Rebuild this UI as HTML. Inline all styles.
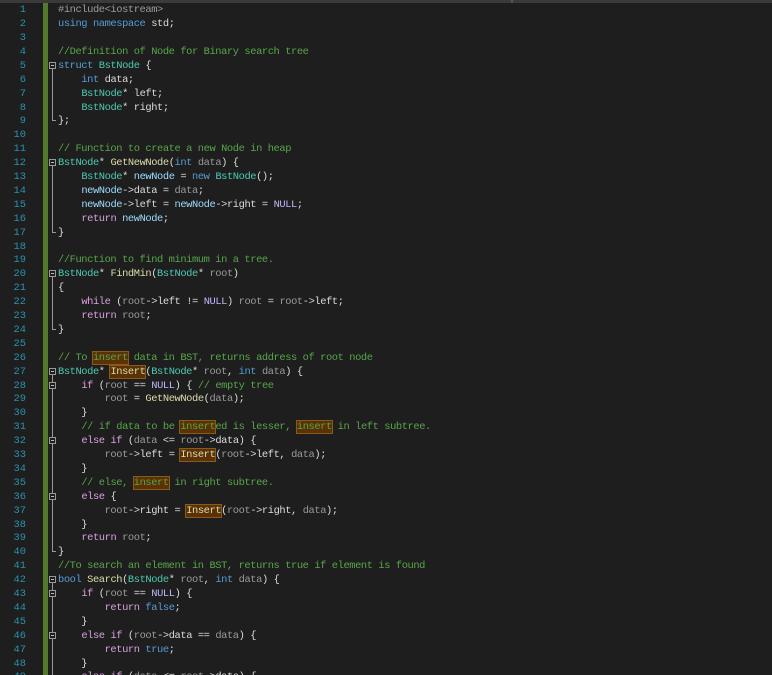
<!DOCTYPE html>
<html><head><meta charset="utf-8"><style>
html,body{margin:0;width:772px;height:675px;overflow:hidden}
body{background:#1e1e1e;position:relative;font-family:"Liberation Mono",monospace;font-size:10.4px;letter-spacing:-0.41px}
.top{position:absolute;left:0;top:0;width:772px;height:3px;background:#3a3a3d}
.div{position:absolute;left:511px;top:0;width:2px;height:3px;background:#555}
.bar{position:absolute;left:43px;top:3px;width:5px;height:672px;background:#537a2a}
.n{position:absolute;left:0;width:26px;text-align:right;color:#2b91af;line-height:14px;height:14px;letter-spacing:0}
.l{position:absolute;left:58px;white-space:pre;color:#dcdcdc;line-height:14px;height:14px}
.k{color:#569cd6}.t{color:#4ec9b0}.c{color:#57a64a}.f{color:#dcdcaa}.p{color:#9a9a9a}.cf{color:#d8a0df}.m{color:#beb7ff}.v{color:#9cdcfe}.pp{color:#9b9b9b}
.h{background:#5a3206;outline:1px solid #8a5a1a}
.fb{position:absolute;left:49px;width:7px;height:7px;border:1px solid #999;box-sizing:border-box;background:#1e1e1e;z-index:2}
.fb:after{content:"";position:absolute;left:1px;top:2px;width:3px;height:1px;background:#bbb}
.vl{position:absolute;left:52px;width:1px;background:#999;z-index:1}
.hl{position:absolute;left:52px;width:4px;height:1px;background:#999}
</style></head><body>
<div class="top"></div><div class="div"></div><div class="bar"></div>
<div class="n" style="top:3px">1</div><div class="l" style="top:3px"><span class="pp">#include&lt;iostream&gt;</span></div>
<div class="n" style="top:17px">2</div><div class="l" style="top:17px"><span class="k">using namespace</span> std;</div>
<div class="n" style="top:31px">3</div>
<div class="n" style="top:45px">4</div><div class="l" style="top:45px"><span class="c">//Definition of Node for Binary search tree</span></div>
<div class="n" style="top:59px">5</div><div class="l" style="top:59px"><span class="k">struct</span> <span class="t">BstNode</span> {</div>
<div class="n" style="top:73px">6</div><div class="l" style="top:73px">    <span class="k">int</span> data;</div>
<div class="n" style="top:87px">7</div><div class="l" style="top:87px">    <span class="t">BstNode</span>* left;</div>
<div class="n" style="top:101px">8</div><div class="l" style="top:101px">    <span class="t">BstNode</span>* right;</div>
<div class="n" style="top:114px">9</div><div class="l" style="top:114px">};</div>
<div class="n" style="top:128px">10</div>
<div class="n" style="top:142px">11</div><div class="l" style="top:142px"><span class="c">// Function to create a new Node in heap</span></div>
<div class="n" style="top:156px">12</div><div class="l" style="top:156px"><span class="t">BstNode</span>* <span class="f">GetNewNode</span>(<span class="k">int</span> <span class="p">data</span>) {</div>
<div class="n" style="top:170px">13</div><div class="l" style="top:170px">    <span class="t">BstNode</span>* <span class="v">newNode</span> = <span class="k">new</span> <span class="t">BstNode</span>();</div>
<div class="n" style="top:184px">14</div><div class="l" style="top:184px">    <span class="v">newNode</span>-&gt;data = <span class="p">data</span>;</div>
<div class="n" style="top:198px">15</div><div class="l" style="top:198px">    <span class="v">newNode</span>-&gt;left = <span class="v">newNode</span>-&gt;right = <span class="m">NULL</span>;</div>
<div class="n" style="top:212px">16</div><div class="l" style="top:212px">    <span class="cf">return</span> <span class="v">newNode</span>;</div>
<div class="n" style="top:226px">17</div><div class="l" style="top:226px">}</div>
<div class="n" style="top:240px">18</div>
<div class="n" style="top:253px">19</div><div class="l" style="top:253px"><span class="c">//Function to find minimum in a tree.</span></div>
<div class="n" style="top:267px">20</div><div class="l" style="top:267px"><span class="t">BstNode</span>* <span class="f">FindMin</span>(<span class="t">BstNode</span>* <span class="p">root</span>)</div>
<div class="n" style="top:281px">21</div><div class="l" style="top:281px">{</div>
<div class="n" style="top:295px">22</div><div class="l" style="top:295px">    <span class="cf">while</span> (<span class="p">root</span>-&gt;left != <span class="m">NULL</span>) <span class="p">root</span> = <span class="p">root</span>-&gt;left;</div>
<div class="n" style="top:309px">23</div><div class="l" style="top:309px">    <span class="cf">return</span> <span class="p">root</span>;</div>
<div class="n" style="top:323px">24</div><div class="l" style="top:323px">}</div>
<div class="n" style="top:337px">25</div>
<div class="n" style="top:351px">26</div><div class="l" style="top:351px"><span class="c">// To <span class="h">insert</span> data in BST, returns address of root node</span></div>
<div class="n" style="top:365px">27</div><div class="l" style="top:365px"><span class="t">BstNode</span>* <span class="f h">Insert</span>(<span class="t">BstNode</span>* <span class="p">root</span>, <span class="k">int</span> <span class="p">data</span>) {</div>
<div class="n" style="top:379px">28</div><div class="l" style="top:379px">    <span class="cf">if</span> (<span class="p">root</span> == <span class="m">NULL</span>) { <span class="c">// empty tree</span></div>
<div class="n" style="top:392px">29</div><div class="l" style="top:392px">        <span class="p">root</span> = <span class="f">GetNewNode</span>(<span class="p">data</span>);</div>
<div class="n" style="top:406px">30</div><div class="l" style="top:406px">    }</div>
<div class="n" style="top:420px">31</div><div class="l" style="top:420px">    <span class="c">// if data to be <span class="h">insert</span>ed is lesser, <span class="h">insert</span> in left subtree.</span></div>
<div class="n" style="top:434px">32</div><div class="l" style="top:434px">    <span class="cf">else if</span> (<span class="p">data</span> &lt;= <span class="p">root</span>-&gt;data) {</div>
<div class="n" style="top:448px">33</div><div class="l" style="top:448px">        <span class="p">root</span>-&gt;left = <span class="f h">Insert</span>(<span class="p">root</span>-&gt;left, <span class="p">data</span>);</div>
<div class="n" style="top:462px">34</div><div class="l" style="top:462px">    }</div>
<div class="n" style="top:476px">35</div><div class="l" style="top:476px">    <span class="c">// else, <span class="h">insert</span> in right subtree.</span></div>
<div class="n" style="top:490px">36</div><div class="l" style="top:490px">    <span class="cf">else</span> {</div>
<div class="n" style="top:504px">37</div><div class="l" style="top:504px">        <span class="p">root</span>-&gt;right = <span class="f h">Insert</span>(<span class="p">root</span>-&gt;right, <span class="p">data</span>);</div>
<div class="n" style="top:518px">38</div><div class="l" style="top:518px">    }</div>
<div class="n" style="top:531px">39</div><div class="l" style="top:531px">    <span class="cf">return</span> <span class="p">root</span>;</div>
<div class="n" style="top:545px">40</div><div class="l" style="top:545px">}</div>
<div class="n" style="top:559px">41</div><div class="l" style="top:559px"><span class="c">//To search an element in BST, returns true if element is found</span></div>
<div class="n" style="top:573px">42</div><div class="l" style="top:573px"><span class="k">bool</span> <span class="f">Search</span>(<span class="t">BstNode</span>* <span class="p">root</span>, <span class="k">int</span> <span class="p">data</span>) {</div>
<div class="n" style="top:587px">43</div><div class="l" style="top:587px">    <span class="cf">if</span> (<span class="p">root</span> == <span class="m">NULL</span>) {</div>
<div class="n" style="top:601px">44</div><div class="l" style="top:601px">        <span class="cf">return</span> <span class="k">false</span>;</div>
<div class="n" style="top:615px">45</div><div class="l" style="top:615px">    }</div>
<div class="n" style="top:629px">46</div><div class="l" style="top:629px">    <span class="cf">else if</span> (<span class="p">root</span>-&gt;data == <span class="p">data</span>) {</div>
<div class="n" style="top:643px">47</div><div class="l" style="top:643px">        <span class="cf">return</span> <span class="k">true</span>;</div>
<div class="n" style="top:657px">48</div><div class="l" style="top:657px">    }</div>
<div class="n" style="top:670px">49</div><div class="l" style="top:670px">    <span class="cf">else if</span> (<span class="p">data</span> &lt;= <span class="p">root</span>-&gt;data) {</div>
<div class="fb" style="top:62px"></div><div class="vl" style="top:69px;height:51px"></div><div class="hl" style="top:120px"></div>
<div class="fb" style="top:159px"></div><div class="vl" style="top:166px;height:66px"></div><div class="hl" style="top:232px"></div>
<div class="fb" style="top:270px"></div><div class="vl" style="top:277px;height:52px"></div><div class="hl" style="top:329px"></div>
<div class="fb" style="top:368px"></div><div class="vl" style="top:375px;height:176px"></div><div class="hl" style="top:551px"></div>
<div class="fb" style="top:382px"></div><div class="fb" style="top:437px"></div><div class="fb" style="top:493px"></div>
<div class="fb" style="top:576px"></div><div class="vl" style="top:583px;height:92px"></div>
<div class="fb" style="top:590px"></div><div class="fb" style="top:632px"></div>
</body></html>
